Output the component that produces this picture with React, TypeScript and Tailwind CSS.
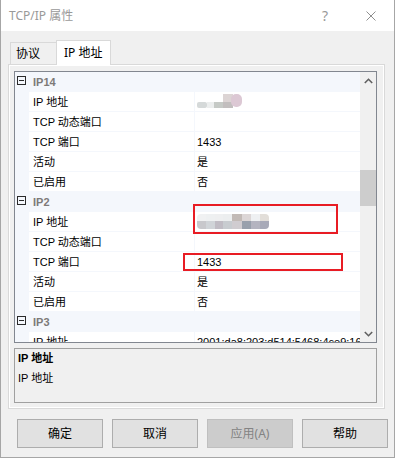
import React from "react";

const uiFont = "font-['Noto_Sans','Noto_Sans_CJK_SC',sans-serif]";
const gridFont = "font-['Liberation_Sans','Noto_Sans_CJK_SC',sans-serif]";

type Row =
    | { kind: "cat"; label: string }
    | { kind: "prop"; name: string; value?: React.ReactNode };

// pixelated blur over the first address
function BlurA() {
    return (
        <svg width="46" height="15" viewBox="0 0 46 15" className="shrink-0">
            <rect x="0" y="8" width="10" height="6" rx="2" fill="#d5d9d9" />
            <rect x="10" y="8" width="7" height="6" fill="#eceeee" />
            <rect x="17" y="8" width="9" height="6" fill="#c6cac6" />
            <rect x="26" y="0" width="10" height="8" fill="#dcd4d4" />
            <rect x="26" y="8" width="10" height="6" fill="#c2bebe" />
            <rect x="34" y="0" width="11" height="13" rx="5" fill="#dcc8d4" />
        </svg>
    );
}

function BlurB() {
    const top = [
        { x: 0, c: "#f0f1f2" }, { x: 9, c: "#eef0f1" }, { x: 18, c: "#eeeff0" }, { x: 26, c: "#eceeef" },
        { x: 35, c: "#c2bab6" }, { x: 45, c: "#dcd6d6" }, { x: 54, c: "#eef0f2" }, { x: 63, c: "#e2ded9" },
    ];
    const bottom = [
        { x: 0, c: "#c8c8cc" }, { x: 9, c: "#d0d4d8" }, { x: 18, c: "#c0bcc4" }, { x: 26, c: "#c8ccd0" },
        { x: 35, c: "#d0ccd0" }, { x: 45, c: "#98a0ac" }, { x: 54, c: "#b4b4c0" }, { x: 63, c: "#a8aab8" },
    ];
    return (
        <svg width="72" height="15" viewBox="0 0 72 15" className="shrink-0">
            <defs>
                <clipPath id="blurb">
                    <rect x="0" y="0" width="72" height="15" rx="4" />
                </clipPath>
            </defs>
            <g clipPath="url(#blurb)">
                {top.map((b, i) => (
                    <rect key={"t" + i} x={b.x} y="0" width="10" height="7" fill={b.c} />
                ))}
                {bottom.map((b, i) => (
                    <rect key={"b" + i} x={b.x} y="7" width="10" height="8" fill={b.c} />
                ))}
            </g>
        </svg>
    );
}

const rows: Row[] = [
    { kind: "cat", label: "IP14" },
    { kind: "prop", name: "IP 地址", value: <BlurA /> },
    { kind: "prop", name: "TCP 动态端口" },
    { kind: "prop", name: "TCP 端口", value: "1433" },
    { kind: "prop", name: "活动", value: "是" },
    { kind: "prop", name: "已启用", value: "否" },
    { kind: "cat", label: "IP2" },
    { kind: "prop", name: "IP 地址", value: <BlurB /> },
    { kind: "prop", name: "TCP 动态端口" },
    { kind: "prop", name: "TCP 端口", value: "1433" },
    { kind: "prop", name: "活动", value: "是" },
    { kind: "prop", name: "已启用", value: "否" },
    { kind: "cat", label: "IP3" },
    { kind: "prop", name: "IP 地址", value: "2001:da8:203:d514:5468:4ce9:16c1" },
];

function Chevron({ down }: { down?: boolean }) {
    return (
        <svg width="9" height="6" viewBox="0 0 9 6">
            <path
                d={down ? "M0.8 1 L4.5 4.7 L8.2 1" : "M0.8 5 L4.5 1.3 L8.2 5"}
                fill="none"
                stroke="#606060"
                strokeWidth="1.6"
            />
        </svg>
    );
}

export default function App() {
    return (
        <div className={`relative w-[395px] h-[458px] bg-[#f0f0f0] border-x border-b border-[#a6a6a6] overflow-hidden text-black ${uiFont}`}>
            {/* Title bar */}
            <div className="h-[31px] bg-white flex items-center">
                <span className="pl-[8px] text-[12px] leading-[16px] text-[#999999]">TCP/IP 属性</span>
                <div className="ml-auto w-[46px] h-full flex items-center justify-center text-[14px] text-[#999999]">?</div>
                <div className="w-[46px] h-full flex items-center justify-center">
                    <svg width="10" height="10" viewBox="0 0 10 10">
                        <path d="M0.5 0.5 L9.5 9.5 M9.5 0.5 L0.5 9.5" stroke="#8f8f8f" strokeWidth="1" />
                    </svg>
                </div>
            </div>

            <div className="pl-[7px] pt-[9px]">
                {/* Tabs */}
                <div className="flex items-end h-[24px] pl-[2px]">
                    <div className="w-[47px] h-[22px] border-t border-x border-[#d9d9d9] bg-[#f0f0f0] pl-[5px] flex items-center text-[12px] leading-[16px]">
                        协议
                    </div>
                    <div className="relative z-10 -ml-px -mb-px w-[55px] h-[25px] border-t border-x border-[#d9d9d9] bg-white pl-[7px] flex items-center text-[12px] leading-[16px]">
                        IP 地址
                    </div>
                </div>

                {/* Tab page */}
                <div className="w-[377px] h-[345px] border border-[#d9d9d9]">
                    <div className="h-full border border-white pl-[4px] pt-[5px]">
                        {/* Property grid */}
                        <div className={`w-[363px] h-[272px] border border-[#828790] bg-white flex ${gridFont}`}>
                            <div className="w-[345px] h-full overflow-hidden flex flex-col text-[11px] leading-[14px]">
                                {rows.map((r, i) =>
                                    r.kind === "cat" ? (
                                        <div key={i} className="flex h-[20px] shrink-0 bg-[#f4f7fc]">
                                            <div className="w-[14px] shrink-0 pl-[2px] pt-[4px]">
                                                <div className="w-[9px] h-[9px] border border-[#2a2a2a] flex items-center justify-center">
                                                    <div className="w-[5px] h-px bg-[#2a2a2a]" />
                                                </div>
                                            </div>
                                            <div className="pl-[4px] flex items-center font-bold text-[#7d7a78]">{r.label}</div>
                                        </div>
                                    ) : (
                                        <div key={i} className="flex h-[20px] shrink-0">
                                            <div className="w-[14px] shrink-0 bg-[#f4f7fc]" />
                                            <div className="w-[166px] shrink-0 border-r border-b border-[#f4f7fc] pl-[4px] flex items-center whitespace-nowrap">
                                                {r.name}
                                            </div>
                                            <div className="w-[165px] shrink-0 border-b border-[#f4f7fc] pl-[2px] flex items-center overflow-hidden whitespace-nowrap">
                                                {r.value}
                                            </div>
                                        </div>
                                    )
                                )}
                            </div>
                            {/* Scrollbar */}
                            <div className="w-[16px] h-full bg-[#f0f0f0] flex flex-col">
                                <div className="h-[17px] shrink-0 flex items-center justify-center">
                                    <Chevron />
                                </div>
                                <div className="flex-1">
                                    <div className="mt-[81px] h-[36px] bg-[#cdcdcd]" />
                                </div>
                                <div className="h-[17px] shrink-0 flex items-center justify-center">
                                    <Chevron down />
                                </div>
                            </div>
                        </div>

                        {/* Description */}
                        <div className={`mt-[5px] w-[363px] h-[55px] border border-[#a0a0a0] bg-[#f0f0f0] pl-[3px] pt-[2px] text-[11px] leading-[14px] ${gridFont}`}>
                            <div className="font-bold">IP 地址</div>
                            <div className="mt-[6px]">IP 地址</div>
                        </div>
                    </div>
                </div>
            </div>

            {/* Buttons */}
            <div className="mt-[10px] pl-[16px] flex gap-[9px] text-[12px] leading-[16px]">
                <button className="w-[86px] h-[29px] border border-[#adadad] bg-[#e1e1e1]">确定</button>
                <button className="w-[86px] h-[29px] border border-[#adadad] bg-[#e1e1e1]">取消</button>
                <button disabled className="w-[86px] h-[29px] border border-[#bfbfbf] bg-[#cccccc] text-[#838383]">应用(A)</button>
                <button className="w-[86px] h-[29px] border border-[#adadad] bg-[#e1e1e1]">帮助</button>
            </div>

            {/* red annotation boxes */}
            <div className="absolute left-[192px] top-[204px] w-[145px] h-[30px] border-2 border-[#e81c24]" />
            <div className="absolute left-[182px] top-[253px] w-[160px] h-[18px] border-2 border-[#e81c24]" />
        </div>
    );
}
